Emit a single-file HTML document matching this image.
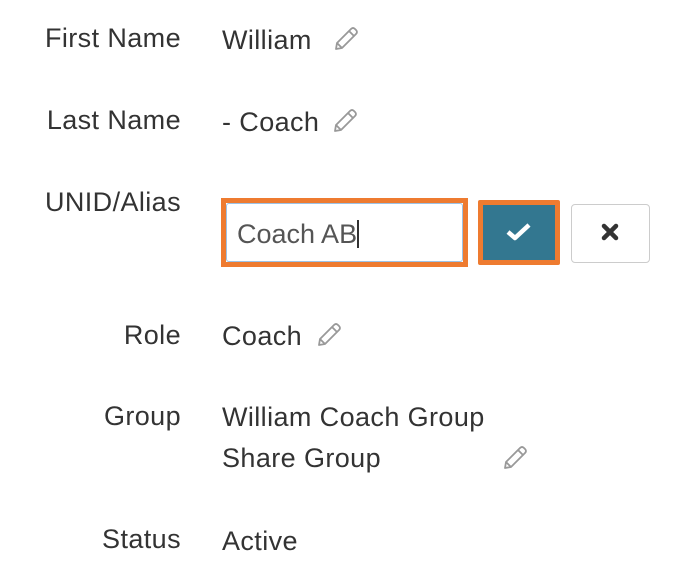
<!DOCTYPE html>
<html><head><style>
body{margin:0;width:696px;height:588px;background:#fff;font-family:"Liberation Sans",sans-serif;color:#333;position:relative;overflow:hidden}
.t{position:absolute;font-size:27px;letter-spacing:0.4px;line-height:30px;white-space:nowrap}
.l{right:515px;text-align:right}
.v{left:222px}
svg.p{position:absolute;width:28px;height:28px}
</style></head><body>
<div class="t l" style="top:23px">First Name</div>
<div class="t v" style="top:25px">William</div>
<svg class="p" style="left:332px;top:25px" viewBox="0 0 28 28"><path d="M4 24 L5 18 L19 4 Q21 2 23 4 L24 5 Q26 7 24 9 L10 23 Z M17 6 L22 11 M5 18 L10 23" fill="none" stroke="#999" stroke-width="1.8" stroke-linejoin="round"/></svg>

<div class="t l" style="top:105px">Last Name</div>
<div class="t v" style="top:107px">- Coach</div>
<svg class="p" style="left:331px;top:107px" viewBox="0 0 28 28"><path d="M4 24 L5 18 L19 4 Q21 2 23 4 L24 5 Q26 7 24 9 L10 23 Z M17 6 L22 11 M5 18 L10 23" fill="none" stroke="#999" stroke-width="1.8" stroke-linejoin="round"/></svg>

<div class="t l" style="top:187px">UNID/Alias</div>
<div style="position:absolute;left:221px;top:198px;width:237px;height:59px;border:5px solid #ee7b30"><div style="position:absolute;inset:0;border:1px solid #9cc2e6;border-radius:3px;background:#fff"></div><div style="position:absolute;left:11px;top:16px;font-size:27px;line-height:30px;color:#555">Coach AB<span style="display:inline-block;width:2px;height:28px;background:#333;vertical-align:-5px"></span></div></div>
<div style="position:absolute;left:478px;top:200px;width:72px;height:55px;border:5px solid #ee7b30;background:#337790;border-radius:2px"></div>
<svg style="position:absolute;left:505px;top:222px" width="28" height="20" viewBox="0 0 28 20"><path d="M3 10 L10 16 L24 3" fill="none" stroke="#fff" stroke-width="4.5" stroke-linejoin="round"/></svg>
<div style="position:absolute;left:571px;top:204px;width:77px;height:57px;border:1px solid #ccc;border-radius:4px;background:#fff"></div>
<svg style="position:absolute;left:600px;top:222px" width="20" height="20" viewBox="0 0 20 20"><path d="M4 4 L16 16 M16 4 L4 16" stroke="#333" stroke-width="4.5" stroke-linecap="round"/></svg>

<div class="t l" style="top:320px">Role</div>
<div class="t v" style="top:321px">Coach</div>
<svg class="p" style="left:315px;top:321px" viewBox="0 0 28 28"><path d="M4 24 L5 18 L19 4 Q21 2 23 4 L24 5 Q26 7 24 9 L10 23 Z M17 6 L22 11 M5 18 L10 23" fill="none" stroke="#999" stroke-width="1.8" stroke-linejoin="round"/></svg>

<div class="t l" style="top:401px">Group</div>
<div class="t v" style="top:402px">William Coach Group</div>
<div class="t v" style="top:443px">Share Group</div>
<svg class="p" style="left:501px;top:444px" viewBox="0 0 28 28"><path d="M4 24 L5 18 L19 4 Q21 2 23 4 L24 5 Q26 7 24 9 L10 23 Z M17 6 L22 11 M5 18 L10 23" fill="none" stroke="#999" stroke-width="1.8" stroke-linejoin="round"/></svg>

<div class="t l" style="top:524px">Status</div>
<div class="t v" style="top:526px">Active</div>
</body></html>
